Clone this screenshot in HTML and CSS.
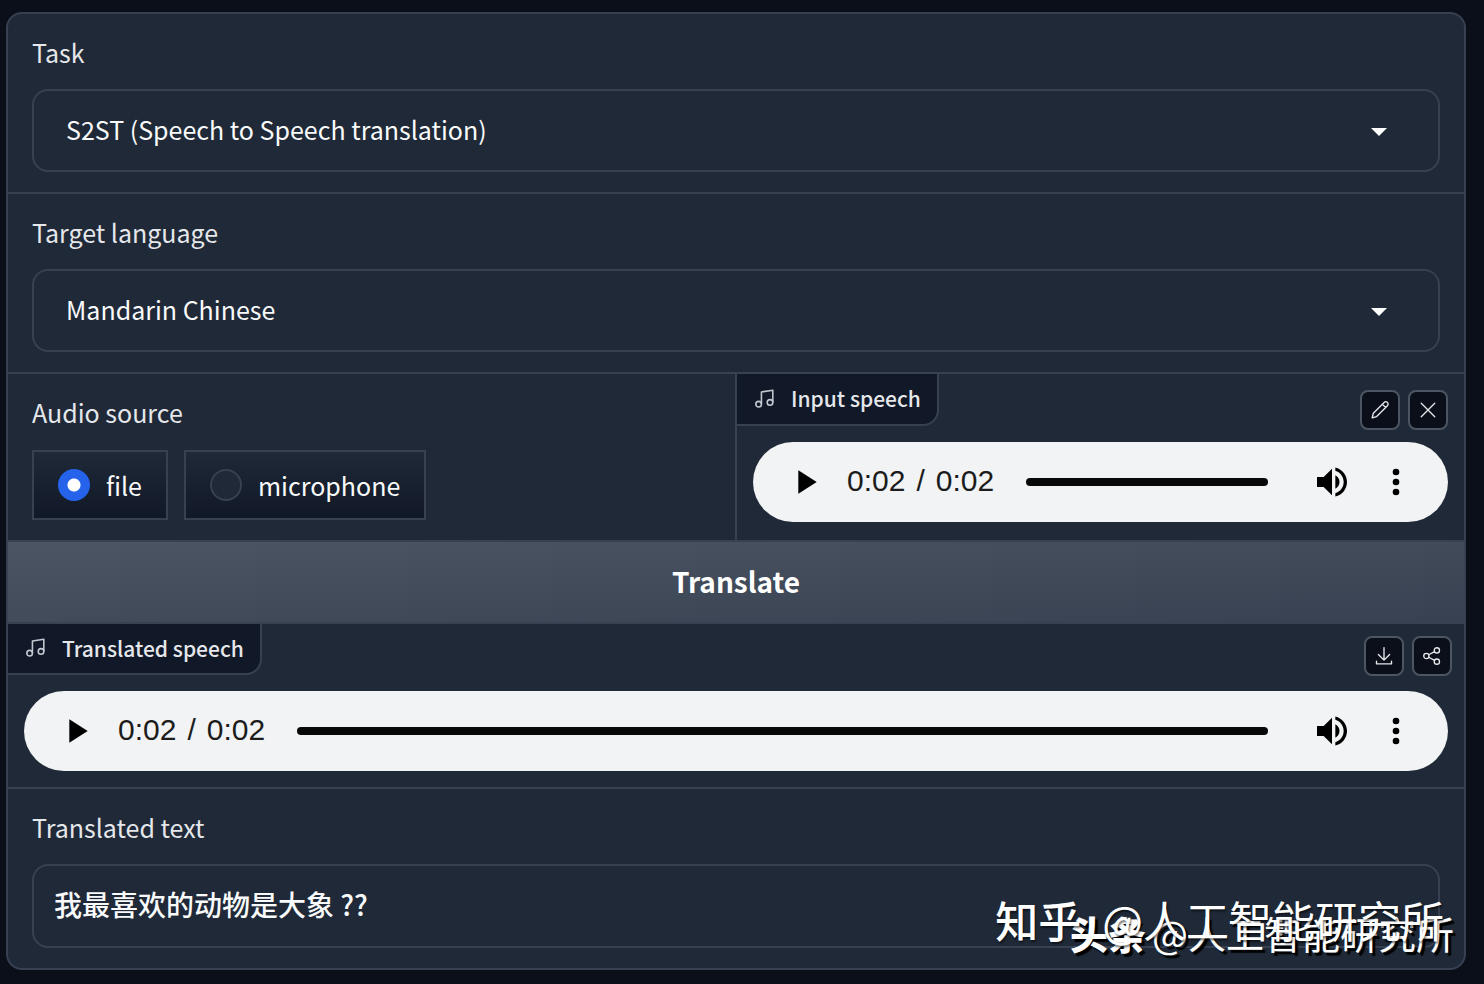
FILE: index.html
```html
<!DOCTYPE html>
<html lang="en">
<head>
<meta charset="utf-8">
<meta name="viewport" content="width=device-width, initial-scale=1">
<title>Speech translation</title>
<link rel="stylesheet" href="styles.css">
</head>
<body>
<svg class="sprite" aria-hidden="true">
  <symbol id="music" viewBox="0 0 24 24"><g fill="none" stroke="currentColor" stroke-width="1.8" stroke-linecap="round" stroke-linejoin="round"><path d="M8.500 18V4.500l13-2v13.500"/><circle cx="5.300" cy="18.500" r="3.200"/><circle cx="18.300" cy="16.500" r="3.200"/></g></symbol>
  <symbol id="play" viewBox="0 0 24 24"><path d="M8 5v14l11-7z"/></symbol>
  <symbol id="volume" viewBox="0 0 24 24"><path d="M3 9v6h4l5 5V4L7 9H3zm13.5 3c0-1.77-1.02-3.29-2.5-4.03v8.05c1.48-.73 2.5-2.25 2.5-4.02zM14 3.23v2.06c2.89.86 5 3.54 5 6.71s-2.11 5.85-5 6.71v2.06c4.01-.91 7-4.49 7-8.77s-2.99-7.86-7-8.77z"/></symbol>
  <symbol id="more" viewBox="0 0 24 24"><circle cx="12" cy="6" r="2"/><circle cx="12" cy="12" r="2"/><circle cx="12" cy="18" r="2"/></symbol>
</svg>
<main class="panel">
  <section class="block block-first">
    <label class="label" for="task">Task</label>
    <div class="dropdown">
      <select id="task" class="field field-select"><option>S2ST (Speech to Speech translation)</option></select>
      <svg class="caret" viewBox="0 0 16 8" aria-hidden="true"><path d="M0 0h16L8 8z"/></svg>
    </div>
  </section>
  <section class="block">
    <label class="label" for="language">Target language</label>
    <div class="dropdown">
      <select id="language" class="field field-select"><option>Mandarin Chinese</option></select>
      <svg class="caret" viewBox="0 0 16 8" aria-hidden="true"><path d="M0 0h16L8 8z"/></svg>
    </div>
  </section>
  <div class="split">
    <fieldset class="block source">
      <legend class="label">Audio source</legend>
      <div class="choices">
        <label class="choice"><input class="radio" type="radio" name="source" checked>file</label>
        <label class="choice"><input class="radio" type="radio" name="source">microphone</label>
      </div>
    </fieldset>
    <section class="audio">
      <header class="audio-head">
        <h2 class="tag"><svg class="tag-icon"><use href="#music"/></svg>Input speech</h2>
        <div class="tools">
          <button class="tool" type="button" aria-label="Edit"><svg viewBox="0 0 24 24"><path d="M1.500 22.500l1.600-6.200L17.500 1.900a3 3 0 0 1 4.400 4.400L7.500 20.700zM15.300 4.500l4.200 4.200"/></svg></button>
          <button class="tool" type="button" aria-label="Clear"><svg viewBox="0 0 24 24"><path d="M3 3l18 18M21 3L3 21"/></svg></button>
        </div>
      </header>
      <div class="player">
        <button class="control" type="button" aria-label="Play"><svg><use href="#play"/></svg></button>
        <div class="time"><span>0:02</span><span>/</span><span>0:02</span></div>
        <input class="track" type="range" value="100" aria-label="Input speech position">
        <button class="control" type="button" aria-label="Mute"><svg><use href="#volume"/></svg></button>
        <button class="control" type="button" aria-label="More options"><svg><use href="#more"/></svg></button>
      </div>
    </section>
  </div>
  <button class="translate" type="button">Translate</button>
  <section class="audio output">
    <header class="audio-head">
      <h2 class="tag"><svg class="tag-icon"><use href="#music"/></svg>Translated speech</h2>
      <div class="tools">
        <button class="tool" type="button" aria-label="Download"><svg viewBox="0 0 24 24"><path d="M12 1v16M4.500 10l7.500 7.500L19.500 10M2 19v3.500h20V19"/></svg></button>
        <button class="tool" type="button" aria-label="Share"><svg viewBox="0 0 24 24"><circle cx="18.500" cy="4.500" r="3.500"/><circle cx="4.500" cy="12" r="3.500"/><circle cx="18.500" cy="19.500" r="3.500"/><path d="M7.600 10.300l7.800-4.200M7.600 13.700l7.800 4.200"/></svg></button>
      </div>
    </header>
    <div class="player">
      <button class="control" type="button" aria-label="Play"><svg><use href="#play"/></svg></button>
      <div class="time"><span>0:02</span><span>/</span><span>0:02</span></div>
      <input class="track" type="range" value="100" aria-label="Translated speech position">
      <button class="control" type="button" aria-label="Mute"><svg><use href="#volume"/></svg></button>
      <button class="control" type="button" aria-label="More options"><svg><use href="#more"/></svg></button>
    </div>
  </section>
  <section class="block block-last">
    <label class="label" for="result">Translated text</label>
    <input id="result" class="field field-text" type="text" value="我最喜欢的动物是大象 ??">
  </section>
  <div class="mark mark-back"><b>头条</b>@人工智能研究所</div>
  <div class="mark mark-front"><b>知乎</b>@人工智能研究所</div>
</main>
</body>
</html>
```
FILE: styles.css
```css
* { box-sizing: border-box; }
body {
  margin: 0;
  padding: 12px 18px 14px 6px;
  background: #0b0f19;
  color: #f9fafb;
  font: 400 25px/40px "Noto Sans CJK SC", "Noto Sans", sans-serif;
}
button, input, select { font: inherit; color: inherit; margin: 0; }
button { padding: 0; border: 0; background: none; }
svg { display: block; }
.sprite { position: absolute; width: 0; height: 0; }

.panel {
  position: relative;
  display: flex;
  flex-direction: column;
  gap: 2px;
  border: 2px solid #374151;
  border-radius: 16px;
  background: #374151;
}
.block, .audio { background: #1f2937; }
.block { min-width: 0; margin: 0; padding: 18px 24px 20px; border: 0; }
.block-first { border-radius: 14px 14px 0 0; }
.block-last { border-radius: 0 0 14px 14px; }
.label { display: block; margin-bottom: 17px; padding: 0; color: #e5e7eb; }

.field {
  display: block;
  width: 100%;
  border: 2px solid #374151;
  border-radius: 16px;
  background: #1f2937;
  appearance: none;
}
.field-select { height: 83px; padding: 0 84px 4px 32px; }
.field-text { height: 84px; padding: 0 20px 4px; font-size: 28px; font-weight: 500; }
.dropdown { position: relative; }
.caret {
  position: absolute;
  top: 39px;
  right: 53px;
  width: 16px;
  height: 8px;
  fill: #fff;
  pointer-events: none;
}

.split { display: grid; grid-template-columns: 1fr 1fr; gap: 2px; }
.source { display: flow-root; }
.source .label { float: left; width: 100%; margin-bottom: 18px; }
.choices { display: flex; gap: 16px; clear: both; }
.choice {
  display: flex;
  align-items: center;
  gap: 16px;
  height: 70px;
  padding: 0 24px;
  border: 2px solid #374151;
  background: linear-gradient(#1f2937, #111827);
}
.radio {
  width: 32px;
  height: 32px;
  border: 2px solid #374151;
  border-radius: 50%;
  background: #1f2937;
  appearance: none;
}
.radio:checked {
  border-color: #2563eb;
  background: radial-gradient(circle, #fff 6px, #2563eb 7px);
}

.audio { padding-bottom: 18px; }
.audio-head { display: flex; justify-content: space-between; align-items: flex-start; height: 68px; }
.tag {
  display: flex;
  align-items: center;
  gap: 16px;
  height: 52px;
  margin: 0;
  padding: 0 16px 2px 17px;
  border: solid #374151;
  border-width: 0 2px 2px 0;
  border-radius: 0 0 16px 0;
  background: #111827;
  color: #e5e7eb;
  font-size: 21px;
  font-weight: 500;
}
.tag-icon { width: 21px; height: 21px; color: #c3c8d0; }
.tools { display: flex; gap: 8px; padding: 16px 16px 0 0; }
.tool {
  display: grid;
  place-items: center;
  width: 40px;
  height: 40px;
  border: 2px solid #4b5563;
  border-radius: 8px;
  background: #0b0f19;
}
.tool svg {
  width: 18px;
  height: 18px;
  fill: none;
  stroke: #e5e7eb;
  stroke-width: 1.8;
  stroke-linecap: round;
  stroke-linejoin: round;
  overflow: visible;
}
.player {
  display: flex;
  align-items: center;
  height: 80px;
  margin: 0 16px;
  padding: 0 32px;
  border-radius: 40px;
  background: #f1f3f4;
  color: #000;
}
.control, .control svg { width: 40px; height: 40px; flex: none; }
.control + .control { margin-left: 24px; }
.time {
  display: flex;
  flex: none;
  gap: 11px;
  margin: 0 32px 0 22px;
  padding-bottom: 2px;
  color: #1c1c1c;
  font-family: "Liberation Sans", Arial, sans-serif;
  font-size: 30px;
}
.track {
  flex: 1;
  min-width: 0;
  height: 8px;
  margin-right: 44px;
  border-radius: 4px;
  background: #080808;
  appearance: none;
}
.track::-webkit-slider-thumb { width: 0; height: 0; appearance: none; }
.output { padding-bottom: 16px; }
.output .audio-head { height: 67px; }
.output .tag { height: 51px; }
.output .tools { padding: 12px 12px 0 0; }

.translate {
  height: 80px;
  padding-bottom: 2px;
  background: linear-gradient(to bottom right, #4b5563, #374151);
  color: #fff;
  font-size: 28px;
  font-weight: 700;
}

.mark { position: absolute; line-height: 60px; color: #fff; white-space: nowrap; pointer-events: none; }
.mark-back { right: 10px; bottom: 5px; font-size: 38px; text-shadow: 3px 3px 1px #000; }
.mark-back b { margin-right: 6px; font-weight: 900; }
.mark-front { right: 20px; bottom: 19px; font-size: 43px; text-shadow: 1px 2px 2px #0008; }
.mark-front b { margin-right: 21px; font-weight: 500; }
```
